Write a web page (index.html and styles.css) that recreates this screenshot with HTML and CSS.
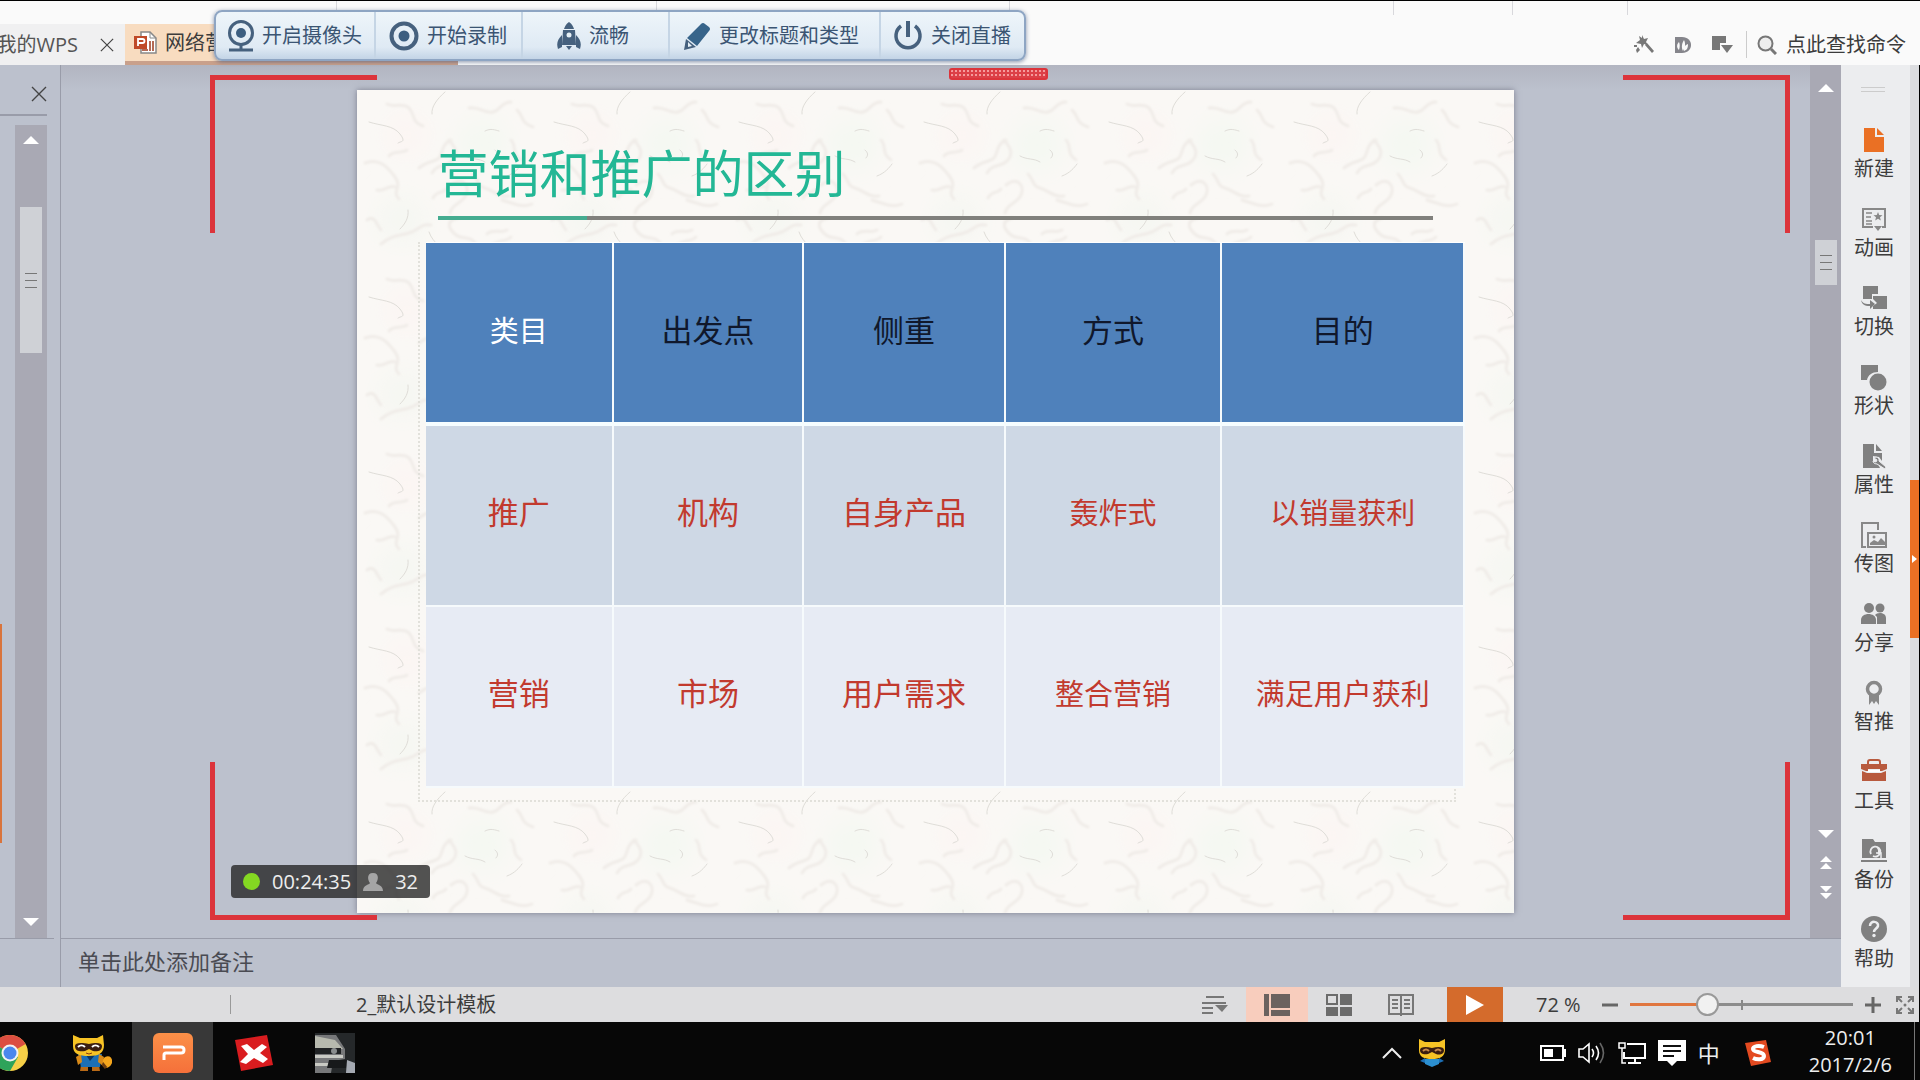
FILE: index.html
```html
<!DOCTYPE html>
<html lang="zh-CN">
<head>
    <meta charset="UTF-8">
    <meta name="viewport" content="width=device-width, initial-scale=1.0">
    <title>WPS 演示</title>
    <link rel="stylesheet" href="styles.css">
</head>
<body>
    <!-- icons used more than once -->
    <svg class="defs" aria-hidden="true">
        <symbol id="close" viewBox="0 0 16 16">
            <path d="M1 1l14 14M15 1L1 15" fill="none" stroke="#444" stroke-width="1.4"/>
        </symbol>
        <symbol id="mascot" viewBox="0 0 40 38">
            <ellipse cx="35" cy="28" rx="5" ry="6" fill="#f4a51c" transform="rotate(25 35 28)"/>
            <path d="M30 29l4 5" stroke="#6b3c10" stroke-width="3"/>
            <path d="M9 31h7v6H8zM20 31h7l1 6h-8z" fill="#b96a17"/>
            <path d="M6 20h24l-2 13H9z" fill="#1c6fb5"/>
            <path d="M4 23l5-3 1 8-4 3zM32 23l-5-3-1 8 4 3z" fill="#d98a18"/>
            <path d="M14 21l4 6 5-6" fill="#0d3560"/>
            <path d="M1 1l7 3h17l6-3 1 10c0 8-5 11-15 11S1 20 1 12z" fill="#f7c325"/>
            <path d="M3 12c0-3 5-4 14-2 8-2 13-1 13 2 0 5-5 6-9 5l-4-2-4 2c-5 1-10 0-10-5z" fill="#3a1d10"/>
            <path d="M6 13c2-2 5-2 7 0M20 13c2-2 5-2 7 0" fill="none" stroke="#fff" stroke-width="2"/>
            <path d="M14 19q3 2 6 0" fill="none" stroke="#8b3c0a"/>
        </symbol>
        <symbol id="mascot-head" viewBox="0 0 28 28">
            <path d="M7 20h14v5l-7 3-7-3z" fill="#2b8fd0"/>
            <path d="M2 22l5-3v5zM26 22l-5-3v5z" fill="#1c6fb5"/>
            <path d="M1 0l6 3h14l6-3v10c0 8-5 10-13 10S1 18 1 11z" fill="#f7c325"/>
            <path d="M2 11c0-3 5-4 12-2 7-2 12-1 12 2 0 5-5 5-8 4l-4-2-4 2c-4 1-8 0-8-4z" fill="#3a1d10"/>
            <path d="M5 12c2-2 4-2 6 0M17 12c2-2 4-2 6 0" fill="none" stroke="#c98a4a" stroke-width="2"/>
        </symbol>
    </svg>

    <div class="app">
        <header class="topbar">
            <div class="ribbon-edge"><i></i><i></i><i></i><i></i><i></i><i></i></div>
            <div class="tabs">
                <div class="tab tab-home">
                    <a href="#">我的WPS</a>
                    <button type="button" aria-label="关闭标签"><svg width="14" height="14"><use href="#close"/></svg></button>
                </div>
                <div class="tab tab-active">
                    <svg width="24" height="24" viewBox="0 0 24 24">
                        <path d="M8 1h9l6 6v15H8z" fill="#fff" stroke="#888" stroke-width="1.5"/>
                        <path d="M17 1v6h6" fill="none" stroke="#888"/>
                        <path d="M17 10v10M20 10v10M9 19h6" stroke="#b56a55" stroke-width="2"/>
                        <path d="M1 5h13v13H1z" fill="#c04a28"/>
                        <path d="M5 15V8h4.500a2 2 0 010 4H5" fill="none" stroke="#fff" stroke-width="1.800"/>
                    </svg>
                    <a href="#">网络营销</a>
                </div>
                <div class="top-tools">
                    <button type="button" aria-label="皮肤"><svg width="20" height="20" viewBox="0 0 20 20"><path d="M8 0l2 4 4-1-2 4 2 3-4-1-2 4-1-4-5-1 4-3-1-4 3 2zM11 10l2-2 7 8-2 2zM4 12l2 3-3 3-1-3zM0 10h3v2H0z" fill="#777"/></svg></button>
                    <button type="button" aria-label="稻壳"><svg width="18" height="18" viewBox="0 0 18 18"><path d="M1 1h7c12 0 12 16 0 16H1z" fill="#85858b"/><path d="M5 14c-3-3-2-6 0-8 1 2 1 5 0 8zM9 15c-2-4-1-8 1-11 2 4 1 8-1 11zM10 15c0-4 1-6 4-7 0 4-1 6-4 7z" fill="#fafafa"/></svg></button>
                    <button type="button" aria-label="界面设置"><svg width="22" height="18" viewBox="0 0 22 18"><path d="M0 0h14v7H8v7H0z" fill="#777"/><path d="M9 9h12l-6 8z" fill="#777"/></svg></button>
                    <label class="search">
                        <svg width="20" height="20" viewBox="0 0 20 20"><circle cx="8.500" cy="8.500" r="7" fill="#eee" stroke="#777" stroke-width="2"/><path d="M14 14l5 5" stroke="#777" stroke-width="3"/></svg>
                        <input type="text" value="点此查找命令" aria-label="查找命令">
                    </label>
                </div>
            </div>
        </header>

        <main class="workspace">
            <aside class="outline">
                <div class="outline-head">
                    <button type="button" aria-label="关闭窗格"><svg width="16" height="16"><use href="#close"/></svg></button>
                </div>
                <div class="outline-body">
                    <span class="current-slide"></span>
                    <div class="scrollbar outline-scroll">
                        <button type="button" class="arrow-up" aria-label="向上滚动"></button>
                        <span class="thumb"></span>
                        <button type="button" class="arrow-down" aria-label="向下滚动"></button>
                    </div>
                </div>
                <div class="outline-foot"></div>
            </aside>

            <div class="editor">
                <div class="stage">
                    <div class="canvas">
                        <section class="slide">
                            <svg class="paper" aria-hidden="true">
                                <defs>
                                    <filter id="soft"><feGaussianBlur stdDeviation="12"/></filter>
                                    <filter id="fuzzy"><feGaussianBlur stdDeviation="1"/></filter>
                                    <pattern id="fibre" width="185" height="175" patternUnits="userSpaceOnUse">
                                        <rect width="185" height="175" fill="#faf8f5"/>
                                        <g filter="url(#soft)">
                                            <circle cx="125" cy="55" r="26" fill="#f4f8f2"/>
                                            <circle cx="45" cy="130" r="24" fill="#f5f7f2"/>
                                            <circle cx="50" cy="45" r="20" fill="#fcf5f3"/>
                                        </g>
                                        <g fill="none" stroke="#dfddd8" stroke-width="1" stroke-linecap="round">
                                            <path d="M88 2c-8 7-14 15-13 22M12 32c12 4 24 3 31 12s0 7-2 9M128 41c6-3 10-1 14 0"/>
                                            <path d="M51 120c1 8-3 14-8 19M72 142c2 6 6 10 9 13M138 60q5 4 1 8"/>
                                            <path d="M150 86c8-3 12-8 15-12M108 66c7 4 14 2 20 6"/>
                                        </g>
                                        <g fill="none" stroke="#f0ece8" stroke-width="3" stroke-linecap="round" filter="url(#fuzzy)">
                                            <path d="M8 73c14-5 22 3 30 14s-4 14 4 22M94 95c12-9 19 1 15 10s-14 8-16 18M145 110c12 4 22 8 30 4M24 154c11-9 18-8 28-11s12-10 22-8M100 128c-13 4-7 12-1 17s16 0 20 10M160 20c7 6 3 13 16 17M92 50c7 8 10 14 3 21s-14 2-20 12M132 158c8-10 16-5 22-11M62 78c8-7 16-6 20-10s2-14 12-18M20 100c8 2 12-6 18-3M112 18c10-2 16 6 24 4s8-10 18-10M76 108c4-8 10-4 13-9M30 14c8 4 16-2 22 4s2 14 14 18M116 84c6 6 4 12 12 14s14 10 24 8M10 130c8-6 10 6 14 10M150 140c-6 4-14-2-20 4M154 50c6 6 0 14 10 20M50 60c-6 4-14 0-18 6"/>
                                        </g>
                                    </pattern>
                                </defs>
                                <rect width="100%" height="100%" fill="url(#fibre)"/>
                            </svg>
                            <h1>营销和推广的区别</h1>
                            <div class="rule"></div>
                            <div class="table-box">
                                <table>
                                    <colgroup>
                                        <col class="c1"><col class="c2"><col class="c3"><col class="c4"><col class="c5">
                                    </colgroup>
                                    <thead>
                                        <tr><th class="light">类目</th><th>出发点</th><th>侧重</th><th>方式</th><th>目的</th></tr>
                                    </thead>
                                    <tbody>
                                        <tr><td>推广</td><td>机构</td><td>自身产品</td><td class="small">轰炸式</td><td class="small">以销量获利</td></tr>
                                        <tr><td>营销</td><td>市场</td><td>用户需求</td><td class="small">整合营销</td><td class="small">满足用户获利</td></tr>
                                    </tbody>
                                </table>
                            </div>
                        </section>

                        <!-- live capture area -->
                        <div class="capture">
                            <span class="corner tl"></span>
                            <span class="corner tr"></span>
                            <span class="corner bl"></span>
                            <span class="corner br"></span>
                            <span class="grip"></span>
                            <div class="live">
                                <span class="dot"></span>
                                <span>00:24:35</span>
                                <svg width="20" height="18" viewBox="0 0 20 18"><path d="M10 0c7 0 5 8 3 10 1 2 7 2 7 8H0c0-6 6-6 7-8-2-2-4-10 3-10z" fill="#a5a5a5"/></svg>
                                <span>32</span>
                            </div>
                        </div>
                    </div>
                    <div class="scrollbar stage-scroll">
                        <button type="button" class="arrow-up" aria-label="向上滚动"></button>
                        <span class="thumb"></span>
                        <button type="button" class="arrow-down" aria-label="向下滚动"></button>
                        <button type="button" class="page-btn" aria-label="上一张"><svg width="14" height="14" viewBox="0 0 14 14"><path d="M7 0l6 6H1zM7 7l6 6H1z" fill="#fff"/></svg></button>
                        <button type="button" class="page-btn" aria-label="下一张"><svg width="14" height="14" viewBox="0 0 14 14"><path d="M7 7l6-6H1zM7 14l6-6H1z" fill="#fff"/></svg></button>
                    </div>
                </div>
                <textarea class="notes" aria-label="备注" placeholder="单击此处添加备注"></textarea>
            </div>

            <nav class="sidebar">
                <span class="handle"></span>
                <button type="button">
                    <svg width="28" height="28" viewBox="0 0 28 28"><path d="M4 2h11v9h9v15H4z" fill="#ea7024"/><path d="M17 2l7 7h-7z" fill="#ea7024"/></svg>
                    新建
                </button>
                <button type="button">
                    <svg width="28" height="28" viewBox="0 0 28 28"><path d="M13 22H3V4h22v18h-3" fill="none" stroke="#888" stroke-width="2"/><path d="M6 8h6M6 12h5M6 16h6M6 19h6" stroke="#888" stroke-width="1.500"/><path d="M18 7l1.200 3 3.300.3-2.500 2 .8 3.200-2.800-1.700-2.800 1.700.8-3.200-2.500-2 3.300-.3zM14 21h8l-4 5z" fill="#888"/></svg>
                    动画
                </button>
                <button type="button">
                    <svg width="28" height="28" viewBox="0 0 28 28"><path d="M3 2h15v8h-6v5H3z" fill="#808080"/><path d="M13 12h14v13H13v-3l4-3-4-4z" fill="#808080"/><path d="M1 16c2 4 5 4 9 4v-4l5 4-5 5v-3C4 22 2 20 1 16z" fill="#808080"/></svg>
                    切换
                </button>
                <button type="button">
                    <svg width="28" height="28" viewBox="0 0 28 28"><path d="M1 2h17v7C12 9 8 12 7 17H1z" fill="#808080"/><circle cx="18" cy="19" r="8.500" fill="#808080"/></svg>
                    形状
                </button>
                <button type="button">
                    <svg width="28" height="28" viewBox="0 0 28 28"><path d="M3 2h11v9h8v8l-3-4-6-1v6l5 2 2 4H3z" fill="#808080"/><path d="M16 2l6 7h-6z" fill="#808080"/><path d="M14 16c2-2 6 0 5 3l7 6-1 2-8-5c-3 0-4-2-4-3l3 1 1-2z" fill="#808080" stroke="#ecedef"/></svg>
                    属性
                </button>
                <button type="button">
                    <svg width="28" height="28" viewBox="0 0 28 28"><path d="M6 26H2V2h16v7" fill="none" stroke="#888" stroke-width="2"/><path d="M8 12h18v14H8z" fill="#ecedef" stroke="#888" stroke-width="2"/><path d="M10 24v-2l4-3 4 2 3-4 4 4v3z" fill="#888"/><circle cx="14" cy="16" r="1.500" fill="#888"/></svg>
                    传图
                </button>
                <button type="button">
                    <svg width="28" height="28" viewBox="0 0 28 28"><circle cx="20" cy="8" r="4.500" fill="#808080"/><path d="M17 24v-7l-2-2c2-3 11-3 11 3v6z" fill="#808080"/><circle cx="9" cy="8" r="5" fill="#808080"/><path d="M1 24v-4c0-8 15-8 15 0v4z" fill="#808080"/></svg>
                    分享
                </button>
                <button type="button">
                    <svg width="28" height="28" viewBox="0 0 28 28"><circle cx="14" cy="10" r="6.500" fill="none" stroke="#888" stroke-width="3.500"/><path d="M9 16h10v10l-3-4-2 3-2-3-3 4z" fill="#888"/></svg>
                    智推
                </button>
                <button type="button">
                    <svg width="28" height="28" viewBox="0 0 28 28"><path d="M8 7V4q0-2 2-2h8q2 0 2 2v3" fill="none" stroke="#b85a3e" stroke-width="2"/><path d="M1 6h26v5l-5 2h-2v-2H8v2H6l-5-2z" fill="#b85a3e"/><path d="M2 13l5 2h14l5-2v10H2z" fill="#b85a3e"/><path d="M8 12h12v2H8z" fill="#fff"/></svg>
                    工具
                </button>
                <button type="button">
                    <svg width="28" height="28" viewBox="0 0 28 28"><path d="M2 2h11l2 3h11v16H2z" fill="#808080"/><path d="M1 24h26" stroke="#808080" stroke-width="2"/><path d="M11 17a5 5 0 112 2M18 17a5 5 0 00-1-7" fill="none" stroke="#ecedef" stroke-width="1.800"/><path d="M16 16h5v5" fill="none" stroke="#ecedef" stroke-width="1.500"/></svg>
                    备份
                </button>
                <button type="button">
                    <svg width="28" height="28" viewBox="0 0 28 28"><circle cx="14" cy="13" r="13" fill="#808080"/><path d="M10 10c0-6 9-5 8 0-1 3-4 3-4 6" fill="none" stroke="#ecedef" stroke-width="2.500"/><circle cx="14" cy="19.500" r="1.700" fill="#ecedef"/></svg>
                    帮助
                </button>
            </nav>
            <div class="edge"><button type="button" aria-label="展开"></button></div>
        </main>

        <footer class="status">
            <span class="sep"></span>
            <span class="template">2_默认设计模板</span>
            <div class="views">
                <button type="button" aria-label="备注"><svg width="26" height="20" viewBox="0 0 26 20"><path d="M4 2h18M0 8h24M0 13h11M0 18h11" stroke="#777" stroke-width="2"/><path d="M13 10h13l-6 7z" fill="#777"/></svg></button>
                <button type="button" class="on" aria-label="普通视图"><svg width="26" height="24" viewBox="0 0 26 24"><path d="M0 1h5v22H0zM7 1h19v14H7zM7 17h19v6H7z" fill="#6b625f"/></svg></button>
                <button type="button" aria-label="浏览视图"><svg width="26" height="24" viewBox="0 0 26 24"><path d="M1 2h10v9H1z" fill="none" stroke="#6b6b6b" stroke-width="2"/><path d="M14 1h12v11H14zM0 14h12v9H0zM14 14h12v9H14z" fill="#6b6b6b"/></svg></button>
                <button type="button" aria-label="阅读视图"><svg width="26" height="24" viewBox="0 0 26 24"><path d="M1 2h24v19H1zM13 2v21" fill="none" stroke="#777" stroke-width="2"/><path d="M4 7h6M4 11h6M4 15h6M16 7h6M16 11h6M16 15h6" stroke="#777" stroke-width="2"/></svg></button>
                <button type="button" class="play" aria-label="放映"><svg width="18" height="22" viewBox="0 0 18 22"><path d="M0 1l18 10L0 21z" fill="#fff"/></svg></button>
            </div>
            <div class="zoom">
                <label for="zoom">72 %</label>
                <button type="button" aria-label="缩小"><svg width="18" height="18" viewBox="0 0 18 18"><path d="M1 9h16" stroke="#666" stroke-width="3"/></svg></button>
                <input type="range" id="zoom" min="0" max="100" value="33">
                <button type="button" aria-label="放大"><svg width="18" height="18" viewBox="0 0 18 18"><path d="M1 9h16M9 1v16" stroke="#666" stroke-width="3"/></svg></button>
                <button type="button" class="fit" aria-label="适应窗口"><svg width="18" height="18" viewBox="0 0 18 18"><path d="M1 6V1h5M12 1h5v5M17 12v5h-5M6 17H1v-5M2 2l4 4M16 2l-4 4M16 16l-4-4M2 16l4-4" fill="none" stroke="#777" stroke-width="2"/><circle cx="9" cy="9" r="1.500" fill="#777"/></svg></button>
            </div>
        </footer>

        <footer class="taskbar">
            <div class="apps">
                <button type="button" class="chrome" aria-label="Chrome">
                    <svg width="36" height="36" viewBox="0 0 36 36"><circle cx="18" cy="18" r="18" fill="#f6cf47"/><path d="M18 18L2.400 9A18 18 0 0133.600 9z" fill="#dc4e41"/><path d="M18 18L2.400 9A18 18 0 0018 36l8-14z" fill="#2ea35a"/><circle cx="18" cy="18" r="8.500" fill="#f2f2f2"/><circle cx="18" cy="18" r="6.500" fill="#4a87ee"/></svg>
                </button>
                <button type="button" aria-label="YY"><svg width="40" height="38"><use href="#mascot"/></svg></button>
                <button type="button" class="on" aria-label="WPS 演示">
                    <svg width="40" height="40" viewBox="0 0 40 40"><defs><linearGradient id="wps" x2="0" y2="1"><stop stop-color="#fb9048"/><stop offset="1" stop-color="#f5703a"/></linearGradient></defs><rect width="40" height="40" rx="6" fill="url(#wps)"/><path d="M10 14h18q3 0 3 3t-3 3H13q-2 0-2 2v5" fill="none" stroke="#fff" stroke-width="3"/></svg>
                </button>
                <button type="button" aria-label="XMind">
                    <svg width="40" height="40" viewBox="0 0 40 40"><path d="M1 7l32-5 6 30-32 6z" fill="#d91c1f"/><path d="M7 13l6-2 7 6 8-6 5 3-7 6 8 6-5 4-9-5-8 6-6-2 8-8z" fill="#fff"/></svg>
                </button>
                <button type="button" aria-label="图片">
                    <svg width="40" height="40" viewBox="0 0 40 40"><rect width="40" height="40" fill="#25282a"/><path d="M0 2h21l9 14v10l-12 2-2 12H0z" fill="#77787a"/><path d="M0 3l20 4 8 9H0z" fill="#b7b9ae"/><path d="M0 15h26v6H0z" fill="#202224"/><path d="M0 22h28v3H0zM0 30h14v3H0z" fill="#c9cac4"/><path d="M14 27h18v8H12z" fill="#17191b"/><circle cx="19" cy="18" r="3" fill="#8a8d8e"/><path d="M32 27l8 3v10h-9z" fill="#a4a9b2"/></svg>
                </button>
            </div>
            <div class="tray">
                <button type="button" class="tray-more" aria-label="显示隐藏的图标"><svg width="20" height="12" viewBox="0 0 20 12"><path d="M1 11l9-9 9 9" fill="none" stroke="#eee" stroke-width="2"/></svg></button>
                <button type="button" class="tray-yy" aria-label="YY"><svg width="28" height="28"><use href="#mascot-head"/></svg></button>
                <button type="button" aria-label="电源"><svg width="26" height="18" viewBox="0 0 26 18"><path d="M1 2h22v14H1zM23 6h2v6h-2" fill="none" stroke="#fff" stroke-width="2"/><path d="M4 5h9v8H4z" fill="#fff"/></svg></button>
                <button type="button" aria-label="音量"><svg width="28" height="22" viewBox="0 0 28 22"><path d="M1 7h4l6-5v18l-6-5H1z" fill="none" stroke="#fff" stroke-width="1.600"/><path d="M14 7q3 4 0 8M18 4q5 7 0 14" fill="none" stroke="#fff" stroke-width="1.600"/><path d="M22 1q7 10 0 20" fill="none" stroke="#666" stroke-width="1.600"/></svg></button>
                <button type="button" aria-label="网络"><svg width="28" height="24" viewBox="0 0 28 24"><path d="M9 3h18v14H6v-6M17 17v5M10 22h13" fill="none" stroke="#fff" stroke-width="2"/><path d="M1 2h6v5H1zM4 7v15h4" fill="none" stroke="#fff" stroke-width="1.500"/></svg></button>
                <button type="button" aria-label="通知"><svg width="28" height="26" viewBox="0 0 28 26"><path d="M0 0h28v21h-9l-5 5-5-5H0z" fill="#fff"/><path d="M5 6h18M5 11h18M5 16h11" stroke="#111" stroke-width="2"/></svg></button>
                <button type="button" class="ime">中</button>
                <button type="button" class="sogou" aria-label="搜狗输入法"><svg width="28" height="28" viewBox="0 0 28 28"><path d="M1 4l21-3 5 22-20 4z" fill="#e34a20"/><path d="M20 8c-5-2-11-1-11 2 0 4 11 2 11 7 0 4-7 4-11 2" fill="none" stroke="#fff" stroke-width="4"/></svg></button>
                <time class="clock"><span>20:01</span><span>2017/2/6</span></time>
            </div>
        </footer>
    </div>

    <!-- floating live toolbar -->
    <div class="live-bar">
        <button type="button">
            <svg width="28" height="32" viewBox="0 0 28 32"><circle cx="14" cy="13" r="11.500" fill="none" stroke="#46617e" stroke-width="3"/><circle cx="14" cy="13" r="5" fill="#3c5e80"/><path d="M14 25v5M2 30h24" stroke="#46617e" stroke-width="3"/></svg>
            开启摄像头
        </button>
        <button type="button">
            <svg width="30" height="30" viewBox="0 0 30 30"><circle cx="15" cy="15" r="12.500" fill="none" stroke="#46617e" stroke-width="4"/><circle cx="15" cy="15" r="5.500" fill="#3c5e80"/></svg>
            开始录制
        </button>
        <button type="button">
            <svg width="24" height="28" viewBox="0 0 24 28"><path d="M12 0c3 2 4 4 5 7H7c1-3 2-5 5-7z" fill="#46617e"/><path d="M6 8h12l1 15H5z" fill="#46617e"/><path d="M5 13v12l-4 2c-2-6 0-10 4-14zM19 13v12l4 2c2-6 0-10-4-14zM9 24h6l-3 4z" fill="#46617e"/><circle cx="12" cy="13" r="2.500" fill="#e6f0f6"/></svg>
            流畅
        </button>
        <button type="button">
            <svg width="28" height="28" viewBox="0 0 28 28"><path d="M18 2q2-2 4 0l4 3q2 2 0 4L14 24 4 16z" fill="#37648a"/><path d="M3 17l10 8-12 3z" fill="#46617e"/><path d="M5 20l4 4-4 1z" fill="#e6f0f6"/></svg>
            更改标题和类型
        </button>
        <button type="button">
            <svg width="30" height="30" viewBox="0 0 30 30"><path d="M8 5a12 12 0 1014 0" fill="none" stroke="#46617e" stroke-width="3.500"/><path d="M15 0v16" stroke="#46617e" stroke-width="4"/></svg>
            关闭直播
        </button>
    </div>
</body>
</html>
```

FILE: styles.css
```css
* {
    box-sizing: border-box;
}
body {
    margin: 0;
    font-family: "Open Sans", "Noto Sans CJK SC", sans-serif;
    font-size: 20px;
    line-height: 24px;
    color: #3c3c3c;
    background: #bcc1cd;
}
button {
    font: inherit;
    color: inherit;
    background: none;
    border: 0;
    padding: 0;
    display: flex;
    align-items: center;
    justify-content: center;
    cursor: pointer;
}
a {
    color: inherit;
    text-decoration: none;
}
svg {
    display: block;
    flex: none;
}
.defs {
    position: absolute;
    width: 0;
    height: 0;
}
.app {
    display: grid;
    grid-template-rows: auto 1fr auto auto;
    min-height: 100vh;
    border-top: 1px solid #000;
}

/* top bar */
.topbar {
    background: #fafafa;
}
.ribbon-edge {
    display: grid;
    grid-template-columns: 337fr 320fr 352fr 384fr 119fr 115fr 292fr;
    height: 23px;
}
.ribbon-edge i {
    border-right: 1px solid #d8d8dc;
    height: 14px;
}
.tabs {
    display: flex;
    height: 41px;
}
.tab {
    display: flex;
    align-items: center;
    white-space: nowrap;
}
.tab-home {
    width: 125px;
    background: #f0f0f1;
    color: #555;
    justify-content: flex-end;
    gap: 22px;
    padding-right: 11px;
}
.tab-active {
    width: 333px;
    gap: 8px;
    padding-left: 8px;
    background: #f8dcc0;
    border-bottom: 4px solid #c9a08b;
}
.top-tools {
    display: flex;
    align-items: center;
    gap: 20px;
    margin-left: auto;
    padding-right: 11px;
}
.search {
    display: flex;
    align-items: center;
    gap: 9px;
    border-left: 1px solid #ccc;
    padding-left: 10px;
    height: 27px;
    margin-left: -8px;
}
.search input {
    width: 123px;
    border: 0;
    padding: 0;
    background: none;
    font: inherit;
    color: inherit;
}

/* floating bar */
.live-bar {
    position: absolute;
    left: 214px;
    top: 10px;
    display: flex;
    height: 51px;
    border: 2px solid #8ea5c3;
    border-radius: 8px;
    background: linear-gradient(#eef5fa, #dfeaf4 75%, #c3d4e6);
    box-shadow: 0 1px 4px rgba(60, 80, 120, 0.6);
    color: #3b5573;
}
.live-bar button {
    gap: 8px;
    padding: 0 14px 0 13px;
    border-right: 2px solid #c5d5e5;
    white-space: nowrap;
}
.live-bar button:first-child {
    gap: 7px;
    padding: 0 12px 0 11px;
}
.live-bar button:nth-child(3) {
    padding: 0 39px 0 34px;
}
.live-bar button:nth-child(4) {
    padding: 0 20px 0 13px;
}
.live-bar button:last-child {
    padding: 0 13px 0 12px;
    border-right: 0;
}

/* workspace */
.workspace {
    display: flex;
    border-right: 1px solid #000;
}
.outline {
    width: 61px;
    border-right: 1px solid #999ca9;
    display: flex;
    flex-direction: column;
}
.outline-head {
    height: 51px;
    width: 47px;
    padding-top: 8px;
    border-bottom: 2px solid #999ca9;
    display: flex;
    justify-content: flex-end;
    align-items: center;
}
.outline-body {
    flex: 1;
    display: flex;
    justify-content: space-between;
    padding: 9px 13px 0 0;
}
.current-slide {
    width: 2px;
    margin: 499px 0 95px;
    background: #d9743c;
}
.outline-foot {
    width: 54px;
    height: 49px;
    border-top: 1px solid #999ca9;
}
.scrollbar {
    width: 32px;
    background: #a9a9b4;
    display: flex;
    flex-direction: column;
    align-items: center;
}
.scrollbar .thumb {
    width: 22px;
    background: linear-gradient(#777, #777) center / 12px 1px no-repeat,
        linear-gradient(#777, #777) 50% calc(50% - 7px) / 12px 1px no-repeat,
        linear-gradient(#777, #777) 50% calc(50% + 7px) / 12px 1px no-repeat, #cfd1d6;
}
.arrow-up::before,
.arrow-down::before {
    content: "";
    border: 8px solid transparent;
}
.arrow-up::before {
    border-top: 0;
    border-bottom-color: #fff;
}
.arrow-down::before {
    border-bottom: 0;
    border-top-color: #fff;
}
.outline-scroll {
    padding: 8px 0 9px;
}
.outline-scroll .thumb {
    height: 146px;
    margin-top: 60px;
}
.arrow-up,
.arrow-down {
    height: 14px;
    width: 24px;
}
.arrow-down {
    margin-top: auto;
}
.editor {
    flex: 1;
    display: flex;
    flex-direction: column;
}
.stage {
    flex: 1;
    display: flex;
}
.canvas {
    flex: 1;
    position: relative;
    padding: 25px 0;
    background: linear-gradient(#b2b5c1, #bcc1cd 25px);
}
.stage-scroll {
    width: 31px;
    padding: 16px 0 39px;
}
.stage-scroll .thumb {
    height: 45px;
    margin-top: 145px;
}
.page-btn {
    margin-top: 15px;
}
.notes {
    height: 49px;
    border: 0;
    border-top: 1px solid #999ca9;
    padding: 10px 17px;
    background: #bcc1cd;
    font: inherit;
    font-size: 22px;
    line-height: 24px;
    resize: none;
    outline: 0;
}
.notes::placeholder {
    color: #4a4b52;
    opacity: 1;
}

/* slide */
.slide {
    position: relative;
    width: 66.2%;
    aspect-ratio: 1158 / 823;
    margin: 0 auto;
    padding: 51px 49px 0 69px;
    background: #faf7f4;
    box-shadow: 0 0 6px rgba(80, 80, 100, 0.6);
    font-family: "Noto Sans CJK SC", sans-serif;
}
.paper {
    position: absolute;
    left: 0;
    top: 0;
    width: 100%;
    height: 100%;
}
.slide h1 {
    position: relative;
    margin: 0 0 15px 12px;
    font-size: 51px;
    line-height: 60px;
    font-weight: 400;
    color: #23b795;
}
.rule {
    position: relative;
    height: 4px;
    margin: 0 32px 22px 12px;
    background: linear-gradient(90deg, #45ac90 15%, #80807c 15%);
}
.table-box {
    position: relative;
}
.table-box::before {
    content: "";
    position: absolute;
    inset: 0 9px -14px -8px;
    border: 2px dotted #e2e1db;
    border-top: 0;
}
table {
    position: relative;
    width: 100%;
    table-layout: fixed;
    border-collapse: separate;
    border-spacing: 0;
    border-top: 1px solid #fff;
}
.c1 { width: 18.1%; }
.c2 { width: 18.3%; }
.c3 { width: 19.4%; }
.c4 { width: 20.8%; }
.c5 { width: 23.4%; }
th,
td {
    height: 181px;
    padding: 0 0 9px;
    font-size: 31px;
    line-height: 40px;
    font-weight: 400;
    text-align: center;
    border-right: 2px solid #f6fafc;
    border-bottom: 2px solid #f6fafc;
}
th {
    height: 183px;
    padding-bottom: 7px;
    color: #10182c;
    background: #4f81bb;
    border-bottom: 4px solid #f6fdff;
}
th.light {
    color: #fff;
    font-size: 29px;
}
td {
    color: #c23a2e;
    background: #ced8e5;
}
tbody tr:last-child td {
    background: #e7ebf4;
}
td.small {
    font-size: 29px;
}

/* capture frame */
.capture {
    position: absolute;
    left: 149px;
    top: 10px;
    right: 20px;
    bottom: 18px;
}
.corner {
    position: absolute;
    width: 167px;
    height: 158px;
    border: 0 solid #dc343b;
}
.tl { left: 0; top: 0; border-width: 5px 0 0 5px; }
.tr { right: 0; top: 0; border-width: 5px 5px 0 0; }
.bl { left: 0; bottom: 0; border-width: 0 0 5px 5px; }
.br { right: 0; bottom: 0; border-width: 0 5px 5px 0; }
.grip {
    position: absolute;
    left: calc(50% - 51px);
    top: -7px;
    width: 99px;
    height: 12px;
    border: 2px solid #dc343b;
    border-radius: 3px;
    background: repeating-linear-gradient(90deg, transparent 0 2px, #dc4048 2px 4px),
        repeating-linear-gradient(#f59a9c 0 2px, #dc4048 2px 4px);
}
.live {
    position: absolute;
    left: 21px;
    bottom: 22px;
    display: flex;
    align-items: center;
    gap: 12px;
    height: 33px;
    padding: 0 12px;
    border-radius: 4px;
    background: rgba(35, 35, 35, 0.78);
    color: #eee;
}
.dot {
    width: 17px;
    height: 17px;
    border-radius: 50%;
    background: #84d822;
}

/* right sidebar */
.sidebar {
    width: 69px;
    padding-top: 22px;
    background: #ecedef;
    display: flex;
    flex-direction: column;
    align-items: center;
}
.handle {
    width: 24px;
    height: 5px;
    margin: 0 6px 34px 0;
    border: 1px solid #ccc;
    border-width: 1px 0;
}
.sidebar button {
    flex-direction: column;
    gap: 3px;
    height: 55px;
    margin: 0 3px 24px 0;
}
.sidebar button:last-child {
    margin-bottom: 0;
}
.edge {
    width: 9px;
    background: #dcdde0;
    padding-top: 415px;
}
.edge button {
    width: 9px;
    height: 158px;
    background: #ea7024;
}
.edge button::before {
    content: "";
    border: 4px solid transparent;
    border-left: 5px solid #fff;
    border-right: 0;
}

/* status bar */
.status {
    display: flex;
    align-items: center;
    height: 35px;
    background: #dddddf;
    border-right: 1px solid #000;
}
.sep {
    width: 1px;
    height: 19px;
    margin-left: 230px;
    background: #999;
}
.template {
    margin-left: 125px;
}
.views {
    display: flex;
    align-self: stretch;
    margin-left: auto;
}
.views button {
    width: 62px;
}
.views .on {
    background: #f8cdbd;
}
.views .play {
    width: 56px;
    margin-left: 15px;
    background: #d46b2c;
}
.zoom {
    display: flex;
    align-items: center;
    gap: 11px;
    padding: 0 5px 0 33px;
}
.zoom label {
    width: 54px;
}
.zoom input {
    appearance: none;
    width: 223px;
    height: 24px;
    margin: 0;
    background: linear-gradient(#888, #888) center / 2px 10px no-repeat,
        linear-gradient(90deg, #e0763f 35%, #8c8c8c 35%) center / 100% 3px no-repeat;
}
.zoom input::-webkit-slider-thumb {
    appearance: none;
    width: 23px;
    height: 23px;
    border: 2px solid #999;
    border-radius: 50%;
    background: #f1f1f1;
}
.fit {
    margin-left: 3px;
}

/* taskbar */
.taskbar {
    display: flex;
    height: 58px;
    background: #070707;
    color: #eee;
}
.apps {
    display: flex;
}
.apps button {
    width: 81px;
    padding-top: 4px;
}
.apps .chrome {
    width: 59px;
    justify-content: flex-start;
    margin-left: -8px;
}
.apps .on {
    background: #383838;
}
.tray {
    display: flex;
    align-items: center;
    gap: 12px;
    margin-left: auto;
    margin-right: 5px;
    padding-right: 22px;
    border-right: 1px solid #777;
}
.tray-more {
    margin-right: 4px;
}
.tray button {
    padding-top: 4px;
}
.tray-yy {
    margin-right: 82px;
}
.ime {
    font-size: 22px;
}
.sogou {
    margin: 0 25px 0 12px;
}
.clock {
    display: flex;
    flex-direction: column;
    gap: 3px;
    text-align: center;
}
```
